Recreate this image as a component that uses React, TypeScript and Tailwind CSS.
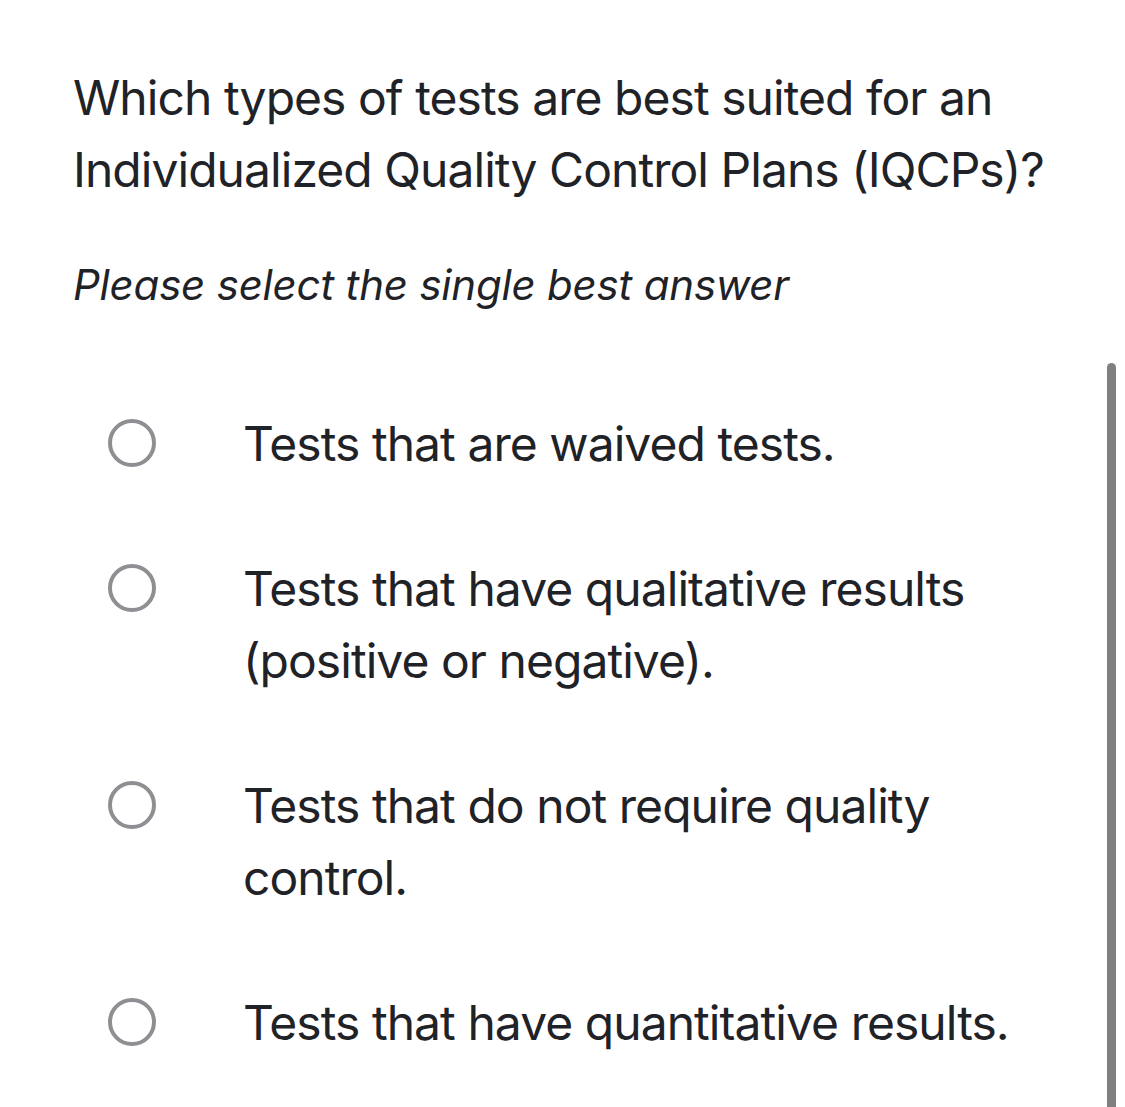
import { useState } from 'react';

const OPTIONS = [
  'Tests that are waived tests.',
  'Tests that have qualitative results (positive or negative).',
  'Tests that do not require quality control.',
  'Tests that have quantitative results.',
];

export default function App() {
  const [picked, setPicked] = useState<number | null>(null);

  return (
    <div className="relative min-h-[1107px] bg-white overflow-hidden font-['Inter',sans-serif] text-[#1f2226]">
      <div className="pl-[73px] pr-[50px] pt-[62px]">
        <h1 className="text-[48px] leading-[72px] font-normal tracking-[-0.95px]">
          Which types of tests are best suited for an Individualized Quality Control Plans (IQCPs)?
        </h1>

        <p className="mt-[49px] text-[42px] leading-[60px] italic tracking-[-0.2px]">
          Please select the single best answer
        </p>

        <div className="mt-[93px] flex flex-col gap-[73px] pl-[35px]">
          {OPTIONS.map((opt, i) => (
            <button
              key={i}
              onClick={() => setPicked(i)}
              className="flex items-start text-left"
            >
              <span className="mt-[11px] w-[48px] h-[48px] shrink-0 rounded-full border-[4px] border-[#8e8e93] flex items-center justify-center">
                {picked === i && <span className="w-[24px] h-[24px] rounded-full bg-[#8e8e93]" />}
              </span>
              <span className="ml-[87px] text-[48px] leading-[72px] tracking-[-0.95px]">{opt}</span>
            </button>
          ))}
        </div>
      </div>

      {/* scroll indicator */}
      <div className="absolute left-[1107px] top-[363px] w-[9px] h-[800px] rounded-t-full bg-[#808080]" />
    </div>
  );
}
